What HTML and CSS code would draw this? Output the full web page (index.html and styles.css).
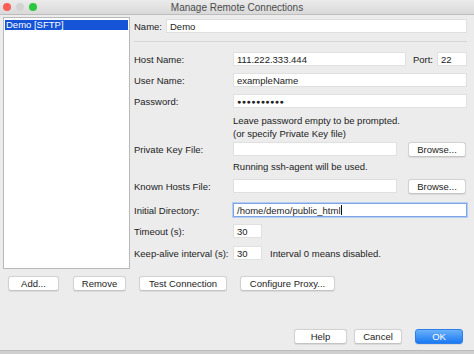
FILE: index.html
```html
<!DOCTYPE html>
<html lang="en">
<head>
  <meta charset="UTF-8" />
  <title>Manage Remote Connections</title>
  <link rel="stylesheet" href="styles.css">
</head>
<body>
  <div class="window">
    <div class="titlebar">
      <div class="lights">
        <span class="light red"></span>
        <span class="light idle"></span>
        <span class="light green"></span>
      </div>
      <div class="title">Manage Remote Connections</div>
    </div>

    <div class="content">
      <div class="list">
        <div class="item selected">Demo [SFTP]</div>
      </div>

      <div class="form">
        <div class="row name-row">
          <label class="lbl-short">Name:</label>
          <div class="field grow">Demo</div>
        </div>
        <hr class="sep" />

        <div class="row host-row">
          <label class="lbl">Host Name:</label>
          <div class="field grow">111.222.333.444</div>
          <label class="port-lbl">Port:</label>
          <div class="field port">22</div>
        </div>
        <div class="row">
          <label class="lbl">User Name:</label>
          <div class="field grow">exampleName</div>
        </div>
        <div class="row">
          <label class="lbl">Password:</label>
          <div class="field grow dots">&#9679;&#9679;&#9679;&#9679;&#9679;&#9679;&#9679;&#9679;&#9679;&#9679;</div>
        </div>
        <div class="note hint">
          Leave password empty to be prompted.<br>
          (or specify Private Key file)
        </div>
        <div class="row pk-row">
          <label class="lbl">Private Key File:</label>
          <div class="field grow"></div>
          <button class="btn browse">Browse...</button>
        </div>
        <div class="note agent">Running ssh-agent will be used.</div>
        <div class="row kh-row">
          <label class="lbl">Known Hosts File:</label>
          <div class="field grow"></div>
          <button class="btn browse">Browse...</button>
        </div>
        <div class="row dir-row">
          <label class="lbl">Initial Directory:</label>
          <div class="field grow focused">/home/demo/public_html<span class="caret"></span></div>
        </div>
        <div class="row timeout-row">
          <label class="lbl">Timeout (s):</label>
          <div class="field small">30</div>
        </div>
        <div class="row keep-row">
          <label class="lbl">Keep-alive interval (s):</label>
          <div class="field small">30</div>
          <span class="inline-note">Interval 0 means disabled.</span>
        </div>
      </div>
    </div>

    <div class="actions">
      <button class="btn add">Add...</button>
      <button class="btn remove">Remove</button>
      <button class="btn test">Test Connection</button>
      <button class="btn proxy">Configure Proxy...</button>
    </div>

    <div class="footer">
      <button class="btn help">Help</button>
      <button class="btn cancel">Cancel</button>
      <button class="btn ok">OK</button>
    </div>
    <div class="edge"></div>
  </div>
</body>
</html>
```

FILE: styles.css
```css
* {
  box-sizing: border-box;
}
body {
  margin: 0;
  font-family: "Liberation Sans", Arial, sans-serif;
  font-size: 9.5px;
  color: #222;
  background: #ececec;
}
.window {
  width: 474px;
  height: 354px;
  display: flex;
  flex-direction: column;
  background: #ececec;
  overflow: hidden;
}

/* title bar */
.titlebar {
  position: relative;
  height: 15px;
  background: linear-gradient(#ebebeb, #d9d9d9);
  border-bottom: 1px solid #bdbdbd;
  display: flex;
  align-items: center;
  justify-content: center;
}
.lights {
  position: absolute;
  left: 3px;
  top: 3px;
  display: flex;
  gap: 5px;
}
.light {
  width: 8px;
  height: 8px;
  border-radius: 50%;
}
.red { background: #fc5f57; }
.idle { background: #d3d3d3; }
.green { background: #2ac73f; }
.title {
  color: #4b4b4b;
  font-size: 10px;
}

/* main area */
.content {
  display: flex;
  padding-top: 2px;
}
.list {
  margin-left: 3px;
  width: 127px;
  height: 252px;
  background: #fff;
  border: 1px solid #b9b9b9;
  padding: 2px 1px;
}
.item {
  height: 10px;
  line-height: 10px;
  padding-left: 1px;
}
.item.selected {
  background: #1553d7;
  color: #fff;
}

.form {
  flex: 1;
  margin-left: 4px;
  margin-right: 7px;
  padding-top: 2px;
  display: flex;
  flex-direction: column;
}
.row {
  display: flex;
  align-items: center;
  height: 14px;
  margin-bottom: 7px;
}
.lbl {
  width: 99px;
  flex-shrink: 0;
}
.lbl-short {
  width: 32px;
  flex-shrink: 0;
}
.field {
  height: 14px;
  line-height: 14px;
  background: #fff;
  border: 1px solid #e0e0e0;
  padding: 0 3px;
  white-space: nowrap;
}
.grow {
  flex: 1;
}
.port-lbl {
  margin: 0 4px 0 7px;
}
.port {
  width: 30px;
}
.dots {
  font-size: 7px;
  letter-spacing: 0.5px;
}
.small {
  width: 29px;
}
.focused {
  border: 1px solid #7ea6e6;
  box-shadow: 0 0 0 1px #b4cdf3;
}
.caret {
  display: inline-block;
  width: 1px;
  height: 10px;
  background: #111;
  vertical-align: -1px;
}

.sep {
  border: none;
  border-top: 1px solid #d6d6d6;
  margin: 1px 0 10px;
}
.note {
  padding-left: 99px;
  line-height: 13px;
}
.hint {
  margin: -1px 0 2px;
}
.agent {
  margin: -2px 0 6px;
}
.pk-row {
  margin-bottom: 6px;
}
.kh-row {
  margin-bottom: 10px;
}
.keep-row {
  margin-top: 1px;
}
.inline-note {
  margin-left: 8px;
}

/* buttons */
.btn {
  font-family: inherit;
  font-size: 9.5px;
  height: 15px;
  padding: 0;
  background: #fff;
  color: #222;
  border: 1px solid #d2d2d2;
  border-bottom-color: #c4c4c4;
  border-radius: 3px;
  box-shadow: 0 0.5px 1px rgba(0,0,0,0.08);
}
.browse {
  width: 58px;
  margin-left: 11px;
  margin-right: 1px;
}
.actions {
  display: flex;
  margin-top: 7px;
  padding-left: 8px;
  gap: 13px;
}
.add { width: 51px; }
.remove { width: 53px; margin-left: 1px; }
.test { width: 88px; }
.proxy { width: 95px; }

.footer {
  display: flex;
  justify-content: flex-end;
  margin-top: 38px;
  padding-right: 11px;
}
.help { width: 53px; }
.cancel { width: 48px; margin-left: 7px; }
.ok {
  width: 48px;
  margin-left: 13px;
  color: #fff;
  border-color: #2d7fea;
  background: linear-gradient(#69b1fa, #1b79f2);
}
.edge {
  margin-top: auto;
  height: 4px;
  background: #cfcfcf;
  border-top: 1px solid #bcbcbc;
}
```
